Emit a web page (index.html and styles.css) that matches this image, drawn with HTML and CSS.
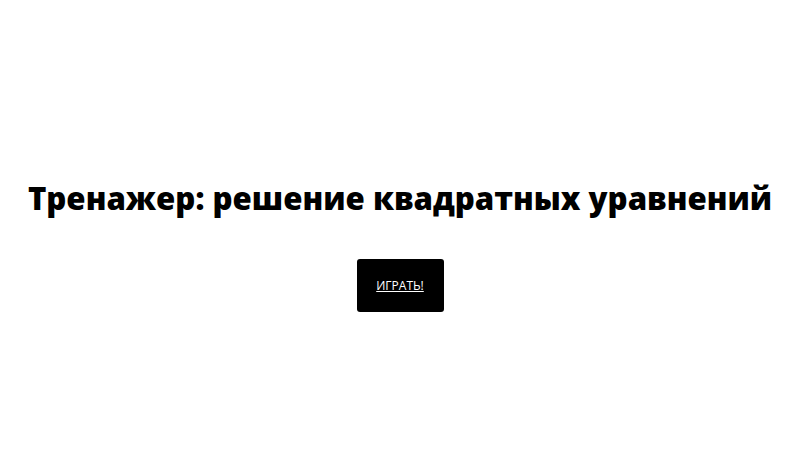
FILE: index.html
```html
<!DOCTYPE html>
<html lang="ru">
<head>
<meta charset="utf-8">
<title>Тренажер</title>
<link rel="stylesheet" href="styles.css">
</head>
<body>
<main class="intro">
  <h1 class="intro-title">Тренажер: решение квадратных уравнений</h1>
  <a class="play-button" href="#">ИГРАТЬ!</a>
</main>
</body>
</html>
```
FILE: styles.css
```css
html, body {
  margin: 0;
  height: 100%;
  background: #fff;
}

.intro {
  box-sizing: border-box;
  height: 100%;
  padding-top: 38px;
  display: flex;
  flex-direction: column;
  align-items: center;
  justify-content: center;
  font-family: "Open Sans", sans-serif;
}

.intro-title {
  margin: 0 0 40px;
  font-size: 31.2px;
  font-weight: 800;
  color: #000;
  text-align: center;
}

.play-button {
  display: flex;
  align-items: center;
  justify-content: center;
  width: 87px;
  height: 53px;
  background: #000;
  color: #fff;
  border-radius: 3px;
  font-size: 12px;
  text-decoration: underline;
}
```
